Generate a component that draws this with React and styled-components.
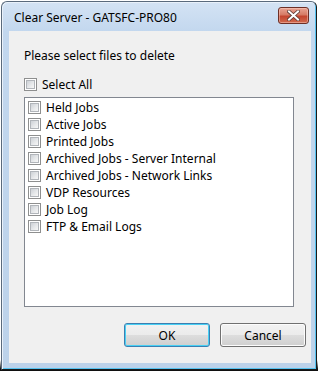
import React from 'react';
import styled, { createGlobalStyle } from 'styled-components';

const GlobalStyle = createGlobalStyle`
    html, body {
        margin: 0;
        padding: 0;
        background: #ffffff;
    }
    body {
        font-family: "Noto Sans", "Open Sans", sans-serif;
        font-size: 12px;
        color: #000;
    }
`;

const files = [
    'Held Jobs',
    'Active Jobs',
    'Printed Jobs',
    'Archived Jobs - Server Internal',
    'Archived Jobs - Network Links',
    'VDP Resources',
    'Job Log',
    'FTP & Email Logs',
];

const Desktop = styled.div`
    width: 318px;
    height: 371px;
    padding: 1px 0 0 1px;
    box-sizing: border-box;
    background: linear-gradient(to bottom, #ffffff 0, #ffffff 360px, #101010 369px);
`;

const Window = styled.div`
    width: 316px;
    height: 369px;
    box-sizing: border-box;
    display: flex;
    flex-direction: column;
    border: 1px solid #5a6a7c;
    border-right-color: #1a1a1a;
    border-bottom-color: #1a1a1a;
    border-radius: 6px 6px 0 0;
    background: linear-gradient(to bottom, #d4e3f4 0, #c2d7ee 30px, #bcd2ea 100%);
    box-shadow: inset 1px 1px 0 #e9f1fa, inset -1px -1px 0 #55c2f0;
`;

const TitleBar = styled.div`
    height: 29px;
    flex: none;
    display: flex;
    align-items: center;
    justify-content: space-between;
    padding: 0 7px 0 12px;
`;

const Title = styled.div`
    font-size: 12px;
    color: #000;
    margin-top: 1px;
`;

const CloseButton = styled.div`
    width: 31px;
    height: 17px;
    box-sizing: border-box;
    display: flex;
    align-items: center;
    justify-content: center;
    margin-top: -2px;
    border: 1px solid #6d2f26;
    border-radius: 3px;
    background: linear-gradient(to bottom, #e8a493 0, #d67b66 45%, #c4452f 55%, #cf6a4f 100%);
    box-shadow: inset 0 0 0 1px rgba(255, 210, 200, 0.45);
`;

const Frame = styled.div`
    flex: 1;
    display: flex;
    padding: 0 5px 6px 7px;
`;

const Client = styled.div`
    flex: 1;
    display: flex;
    flex-direction: column;
    background: #f0f0f0;
    padding: 0 5px 0 15px;
`;

const Prompt = styled.div`
    margin-top: 17px;
    line-height: 16px;
    height: 16px;
`;

const SelectAllRow = styled.label`
    display: flex;
    align-items: center;
    height: 13px;
    margin-top: 14px;
    gap: 5px;
`;

const Box = styled.span`
    width: 13px;
    height: 13px;
    flex: none;
    box-sizing: border-box;
    border: 1px solid #8e8f8f;
    background: #fff;
    padding: 1px;
    display: block;

    &::after {
        content: '';
        display: block;
        width: 9px;
        height: 9px;
        box-sizing: border-box;
        border: 1px solid #b1b5ba;
        background: linear-gradient(135deg, #cdd1d6 0, #e6e8ea 55%, #f7f7f7 100%);
    }
`;

const ListBox = styled.div`
    width: 270px;
    height: 210px;
    margin-top: 6px;
    box-sizing: border-box;
    border: 1px solid #828790;
    background: #ffffff;
    padding: 1px 0 0 3px;
`;

const Item = styled.div`
    display: flex;
    align-items: center;
    height: 17px;
    gap: 5px;
`;

const ItemText = styled.span`
    line-height: 13px;
    white-space: nowrap;
`;

const ButtonRow = styled.div`
    display: flex;
    justify-content: flex-end;
    gap: 10px;
    margin-top: 16px;
`;

const Button = styled.div`
    width: 86px;
    height: 24px;
    box-sizing: border-box;
    display: flex;
    align-items: center;
    justify-content: center;
    border: 1px solid ${p => (p.$default ? '#3c7fb1' : '#707070')};
    border-radius: 3px;
    background: linear-gradient(to bottom, #f2f2f2 0, #ebebeb 50%, #dddddd 51%, #cfcfcf 100%);
    box-shadow: inset 0 0 0 1px ${p => (p.$default ? '#48d0f4' : '#fcfcfc')};
    font-size: 12px;
`;

const CloseGlyph = () => (
    <svg width="13" height="11" viewBox="0 0 13 11">
        <path
            d="M2 1.5 L11 9.5 M11 1.5 L2 9.5"
            stroke="#5a3a35"
            strokeWidth="3.6"
            strokeLinecap="square"
        />
        <path
            d="M2 1.5 L11 9.5 M11 1.5 L2 9.5"
            stroke="#ffffff"
            strokeWidth="2"
            strokeLinecap="square"
        />
    </svg>
);

export default function App() {
    return (
        <Desktop>
            <GlobalStyle />
            <Window>
                <TitleBar>
                    <Title>Clear Server - GATSFC-PRO80</Title>
                    <CloseButton>
                        <CloseGlyph />
                    </CloseButton>
                </TitleBar>
                <Frame>
                    <Client>
                        <Prompt>Please select files to delete</Prompt>
                        <SelectAllRow>
                            <Box />
                            <span>Select All</span>
                        </SelectAllRow>
                        <ListBox>
                            {files.map(f => (
                                <Item key={f}>
                                    <Box />
                                    <ItemText>{f}</ItemText>
                                </Item>
                            ))}
                        </ListBox>
                        <ButtonRow>
                            <Button $default>OK</Button>
                            <Button>Cancel</Button>
                        </ButtonRow>
                    </Client>
                </Frame>
            </Window>
        </Desktop>
    );
}
